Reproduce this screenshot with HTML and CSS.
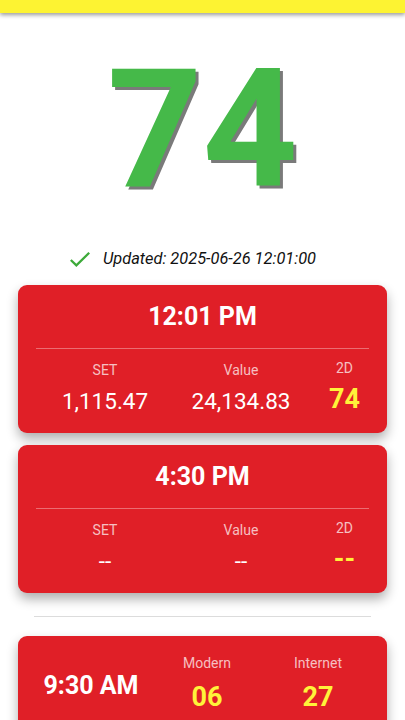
FILE: index.html
```html
<!DOCTYPE html>
<html>
<head>
<meta charset="utf-8">
<link rel="stylesheet" href="styles.css">
</head>
<body>
<div class="topbar"></div>
<div class="hero">74</div>
<div class="updated">
  <svg class="check" width="20" height="15" viewBox="3.4 5.6 17.6 13.4" preserveAspectRatio="none"><path d="M9 16.17L4.83 12l-1.42 1.41L9 19 21 7l-1.41-1.41z" fill="#3daa3a"/></svg>
  <span class="updated-text">Updated: 2025-06-26 12:01:00</span>
</div>

<div class="card card-first">
  <div class="card-title">12:01 PM</div>
  <div class="divider"></div>
  <div class="stats">
    <div class="stat">
      <div class="label">SET</div>
      <div class="value">1,115.47</div>
    </div>
    <div class="stat">
      <div class="label">Value</div>
      <div class="value">24,134.83</div>
    </div>
    <div class="stat">
      <div class="label label-2d">2D</div>
      <div class="value value-2d">74</div>
    </div>
  </div>
</div>

<div class="card">
  <div class="card-title">4:30 PM</div>
  <div class="divider"></div>
  <div class="stats">
    <div class="stat">
      <div class="label">SET</div>
      <div class="value">--</div>
    </div>
    <div class="stat">
      <div class="label">Value</div>
      <div class="value">--</div>
    </div>
    <div class="stat">
      <div class="label label-2d">2D</div>
      <div class="value value-2d">--</div>
    </div>
  </div>
</div>

<div class="separator"></div>

<div class="card card-morning">
  <div class="morning-time">9:30 AM</div>
  <div class="stat">
    <div class="label">Modern</div>
    <div class="value value-2d">06</div>
  </div>
  <div class="stat">
    <div class="label">Internet</div>
    <div class="value value-2d">27</div>
  </div>
</div>
</body>
</html>
```

FILE: styles.css
```css
* { box-sizing: border-box; }
html, body {
  margin: 0;
  padding: 0;
  background: #ffffff;
  font-family: Roboto, "Noto Sans", sans-serif;
  overflow: hidden;
}
.topbar {
  height: 13px;
  background: #fdf332;
  box-shadow: 0 2px 4px rgba(0,0,0,0.4);
  position: relative;
  z-index: 2;
}
.hero {
  margin-top: 34px;
  height: 166px;
  line-height: 166px;
  font-size: 166px;
  font-weight: 700;
  text-align: center;
  color: #45b949;
  text-shadow: 3px 3px 0 #7a7a7a;
}
.updated {
  margin-top: 36px;
  height: 20px;
  display: flex;
  align-items: center;
  justify-content: center;
  padding-right: 19px;
}
.check {
  display: block;
  margin-right: 13px;
}
.updated-text {
  font-style: italic;
  font-size: 16.4px;
  color: #111;
  line-height: 20px;
}
.card {
  margin: 12px 18px 0;
  background: #e01f27;
  border-radius: 9px;
  box-shadow: 0 6px 12px rgba(0,0,0,0.32);
  color: #fff;
  padding-bottom: 18px;
}
.card-first { margin-top: 16px; }
.card-title {
  padding-top: 17px;
  line-height: 30px;
  font-size: 25px;
  font-weight: 700;
  text-align: center;
}
.divider {
  margin: 16px 18px 0;
  height: 1px;
  background: rgba(255,255,255,0.35);
}
.stats {
  display: grid;
  grid-template-columns: 138px 134px 1fr;
  padding: 0 6px 0 18px;
}
.stat {
  text-align: center;
}
.label {
  margin-top: 13px;
  line-height: 16px;
  font-size: 14px;
  color: rgba(255,255,255,0.72);
}
.label-2d {
  margin-top: 11px;
  margin-bottom: 2px;
}
.value {
  margin-top: 9px;
  line-height: 28px;
  font-size: 22.5px;
}
.value-2d {
  font-size: 27px;
  font-weight: 700;
  color: #fff23a;
}
.separator {
  margin: 23px 34px 0;
  height: 1px;
  background: #dcdcdc;
}
.card-morning {
  margin-top: 19px;
  display: grid;
  grid-template-columns: 121px 111px 111px;
  padding: 6px 0 19px 12.5px;
  align-items: center;
}
.morning-time {
  margin-top: 18px;
  font-size: 25px;
  font-weight: 700;
  text-align: center;
  line-height: 30px;
}
.card-morning .value {
  margin-top: 11px;
  line-height: 30px;
}
```
